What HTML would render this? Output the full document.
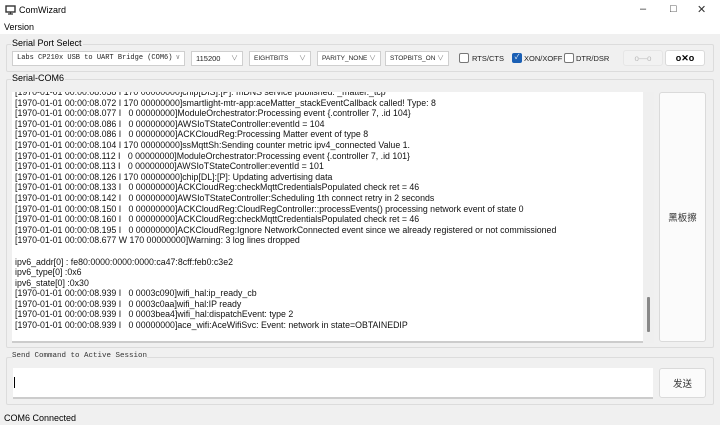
<!DOCTYPE html>
<html><head><meta charset="utf-8"><style>
*{box-sizing:border-box;margin:0;padding:0}
body{width:720px;height:425px;overflow:hidden;background:#f0f0f0;font-family:"Liberation Sans",Arial,"Noto Sans CJK SC",sans-serif;position:relative;font-size:11px;color:#000}
.abs{position:absolute}
.title{left:0;top:0;width:720px;height:20px;background:#fff}
.menu{left:0;top:20px;width:720px;height:14px;background:#fff}
.grp{border:1px solid #dcdcdc;border-radius:2px}
.cb{background:#fff;border:1px solid #cfcfcf;height:15px;font-size:7px;line-height:13px;padding-left:4px;color:#222;white-space:nowrap;overflow:hidden}
.cb::after{content:"\2228";position:absolute;right:4px;top:0;color:#888;font-size:7px;background:#fff;padding-left:2px}
.chk{width:10px;height:10px;border:1px solid #777;border-radius:2px;background:#fff}
.lbl{font-size:7.5px;color:#222;white-space:nowrap}
.log{left:12px;top:92px;width:632px;height:251px;background:#fff;overflow:hidden;border-bottom:2px solid #ccc}
.log pre{font-family:"Liberation Sans",Arial,sans-serif;font-size:8.8px;line-height:10.6px;position:absolute;left:3px;top:-5px;white-space:pre;color:#111}
.btn{background:#fbfbfb;border:1px solid #dadada;border-radius:3px;display:flex;align-items:center;justify-content:center;font-family:"Liberation Sans","Noto Sans CJK SC",sans-serif;font-size:9.5px;color:#333}
</style></head><body>
<div class="abs title"></div>
<div class="abs menu"></div>
<svg class="abs" style="left:5px;top:5px" width="11" height="10"><rect x="1" y="1" width="9" height="6" fill="none" stroke="#333" stroke-width="1.4"/><path d="M3 9h5M5.5 7v2" stroke="#333" stroke-width="1.2"/></svg>
<div class="abs" style="left:19px;top:5px;font-size:9px">ComWizard</div>
<div class="abs" style="left:670px;top:3px;font-size:11px;color:#333">&#9633;</div>
<div class="abs" style="left:640px;top:3px;font-size:11px;color:#333">&#8211;</div>
<div class="abs" style="left:697px;top:3px;font-size:11px;color:#333">&#10005;</div>
<div class="abs" style="left:4px;top:22px;font-size:9px">Version</div>

<div class="abs grp" style="left:6px;top:44px;width:708px;height:28px"></div>
<div class="abs" style="left:11px;top:38px;font-size:9px;background:#f0f0f0;padding:0 1px">Serial Port Select</div>
<div class="abs cb" style="left:12px;top:51px;width:173px;font-family:'Liberation Mono',monospace;font-size:7px">Labs CP210x USB to UART Bridge (COM6)</div>
<div class="abs cb" style="left:191px;top:51px;width:52px;font-size:7.5px">115200</div>
<div class="abs cb" style="left:249px;top:51px;width:62px;font-size:6.5px">EIGHTBITS</div>
<div class="abs cb" style="left:317px;top:51px;width:64px;font-size:6.5px">PARITY_NONE</div>
<div class="abs cb" style="left:385px;top:51px;width:64px;font-size:6.5px">STOPBITS_ONE</div>
<div class="abs chk" style="left:459px;top:53px"></div><div class="abs lbl" style="left:472px;top:54px">RTS/CTS</div>
<div class="abs chk" style="left:512px;top:53px;background:#1a5fb4;border-color:#1a5fb4;color:#fff;font-size:7px;line-height:8px;text-align:center">&#10003;</div><div class="abs lbl" style="left:524px;top:54px">XON/XOFF</div>
<div class="abs chk" style="left:564px;top:53px"></div><div class="abs lbl" style="left:576px;top:54px">DTR/DSR</div>
<div class="abs btn" style="left:623px;top:50px;width:40px;height:16px;background:#f2f2f2;border-color:#e6e6e6;color:#bbb;font-size:8px">o—o</div>
<div class="abs btn" style="left:665px;top:50px;width:40px;height:16px;background:#fff;font-weight:bold;font-size:9px;color:#000">o✕o</div>

<div class="abs grp" style="left:6px;top:79px;width:708px;height:269px"></div>
<div class="abs" style="left:11px;top:73px;font-size:9px;background:#f0f0f0;padding:0 1px">Serial-COM6</div>
<div class="abs log"><pre>[1970-01-01 00:00:08.058 I 170 00000000]chip[DIS]:[P]: mDNS service published: _matter._tcp
[1970-01-01 00:00:08.072 I 170 00000000]smartlight-mtr-app:aceMatter_stackEventCallback called! Type: 8
[1970-01-01 00:00:08.077 I   0 00000000]ModuleOrchestrator:Processing event {.controller 7, .id 104}
[1970-01-01 00:00:08.086 I   0 00000000]AWSIoTStateController:eventId = 104
[1970-01-01 00:00:08.086 I   0 00000000]ACKCloudReg:Processing Matter event of type 8
[1970-01-01 00:00:08.104 I 170 00000000]ssMqttSh:Sending counter metric ipv4_connected Value 1.
[1970-01-01 00:00:08.112 I   0 00000000]ModuleOrchestrator:Processing event {.controller 7, .id 101}
[1970-01-01 00:00:08.113 I   0 00000000]AWSIoTStateController:eventId = 101
[1970-01-01 00:00:08.126 I 170 00000000]chip[DL]:[P]: Updating advertising data
[1970-01-01 00:00:08.133 I   0 00000000]ACKCloudReg:checkMqttCredentialsPopulated check ret = 46
[1970-01-01 00:00:08.142 I   0 00000000]AWSIoTStateController:Scheduling 1th connect retry in 2 seconds
[1970-01-01 00:00:08.150 I   0 00000000]ACKCloudReg:CloudRegController::processEvents() processing network event of state 0
[1970-01-01 00:00:08.160 I   0 00000000]ACKCloudReg:checkMqttCredentialsPopulated check ret = 46
[1970-01-01 00:00:08.195 I   0 00000000]ACKCloudReg:Ignore NetworkConnected event since we already registered or not commissioned
[1970-01-01 00:00:08.677 W 170 00000000]Warning: 3 log lines dropped

ipv6_addr[0] : fe80:0000:0000:0000:ca47:8cff:feb0:c3e2
ipv6_type[0] :0x6
ipv6_state[0] :0x30
[1970-01-01 00:00:08.939 I   0 0003c090]wifi_hal:ip_ready_cb
[1970-01-01 00:00:08.939 I   0 0003c0aa]wifi_hal:IP ready
[1970-01-01 00:00:08.939 I   0 0003bea4]wifi_hal:dispatchEvent: type 2
[1970-01-01 00:00:08.939 I   0 00000000]ace_wifi:AceWifiSvc: Event: network in state=OBTAINEDIP</pre></div>
<div class="abs" style="left:643px;top:92px;width:11px;height:251px;background:#efefef"></div>
<div class="abs" style="left:647px;top:297px;width:3px;height:35px;background:#888;border-radius:1px"></div>
<div class="abs btn" style="left:659px;top:92px;width:47px;height:250px">黑板擦</div>

<div class="abs grp" style="left:6px;top:357px;width:708px;height:48px"></div>
<div class="abs" style="left:12px;top:352px;font-family:'Liberation Mono',monospace;font-size:7.5px;color:#333;background:#f0f0f0">Send Command to Active Session</div>
<div class="abs" style="left:13px;top:368px;width:640px;height:31px;background:#fff;border-bottom:2px solid #ccc"></div>
<div class="abs" style="left:14px;top:377px;width:1px;height:11px;background:#000"></div>
<div class="abs btn" style="left:659px;top:368px;width:47px;height:30px">发送</div>
<div class="abs" style="left:4px;top:413px;font-size:9px">COM6 Connected</div>
</body></html>
